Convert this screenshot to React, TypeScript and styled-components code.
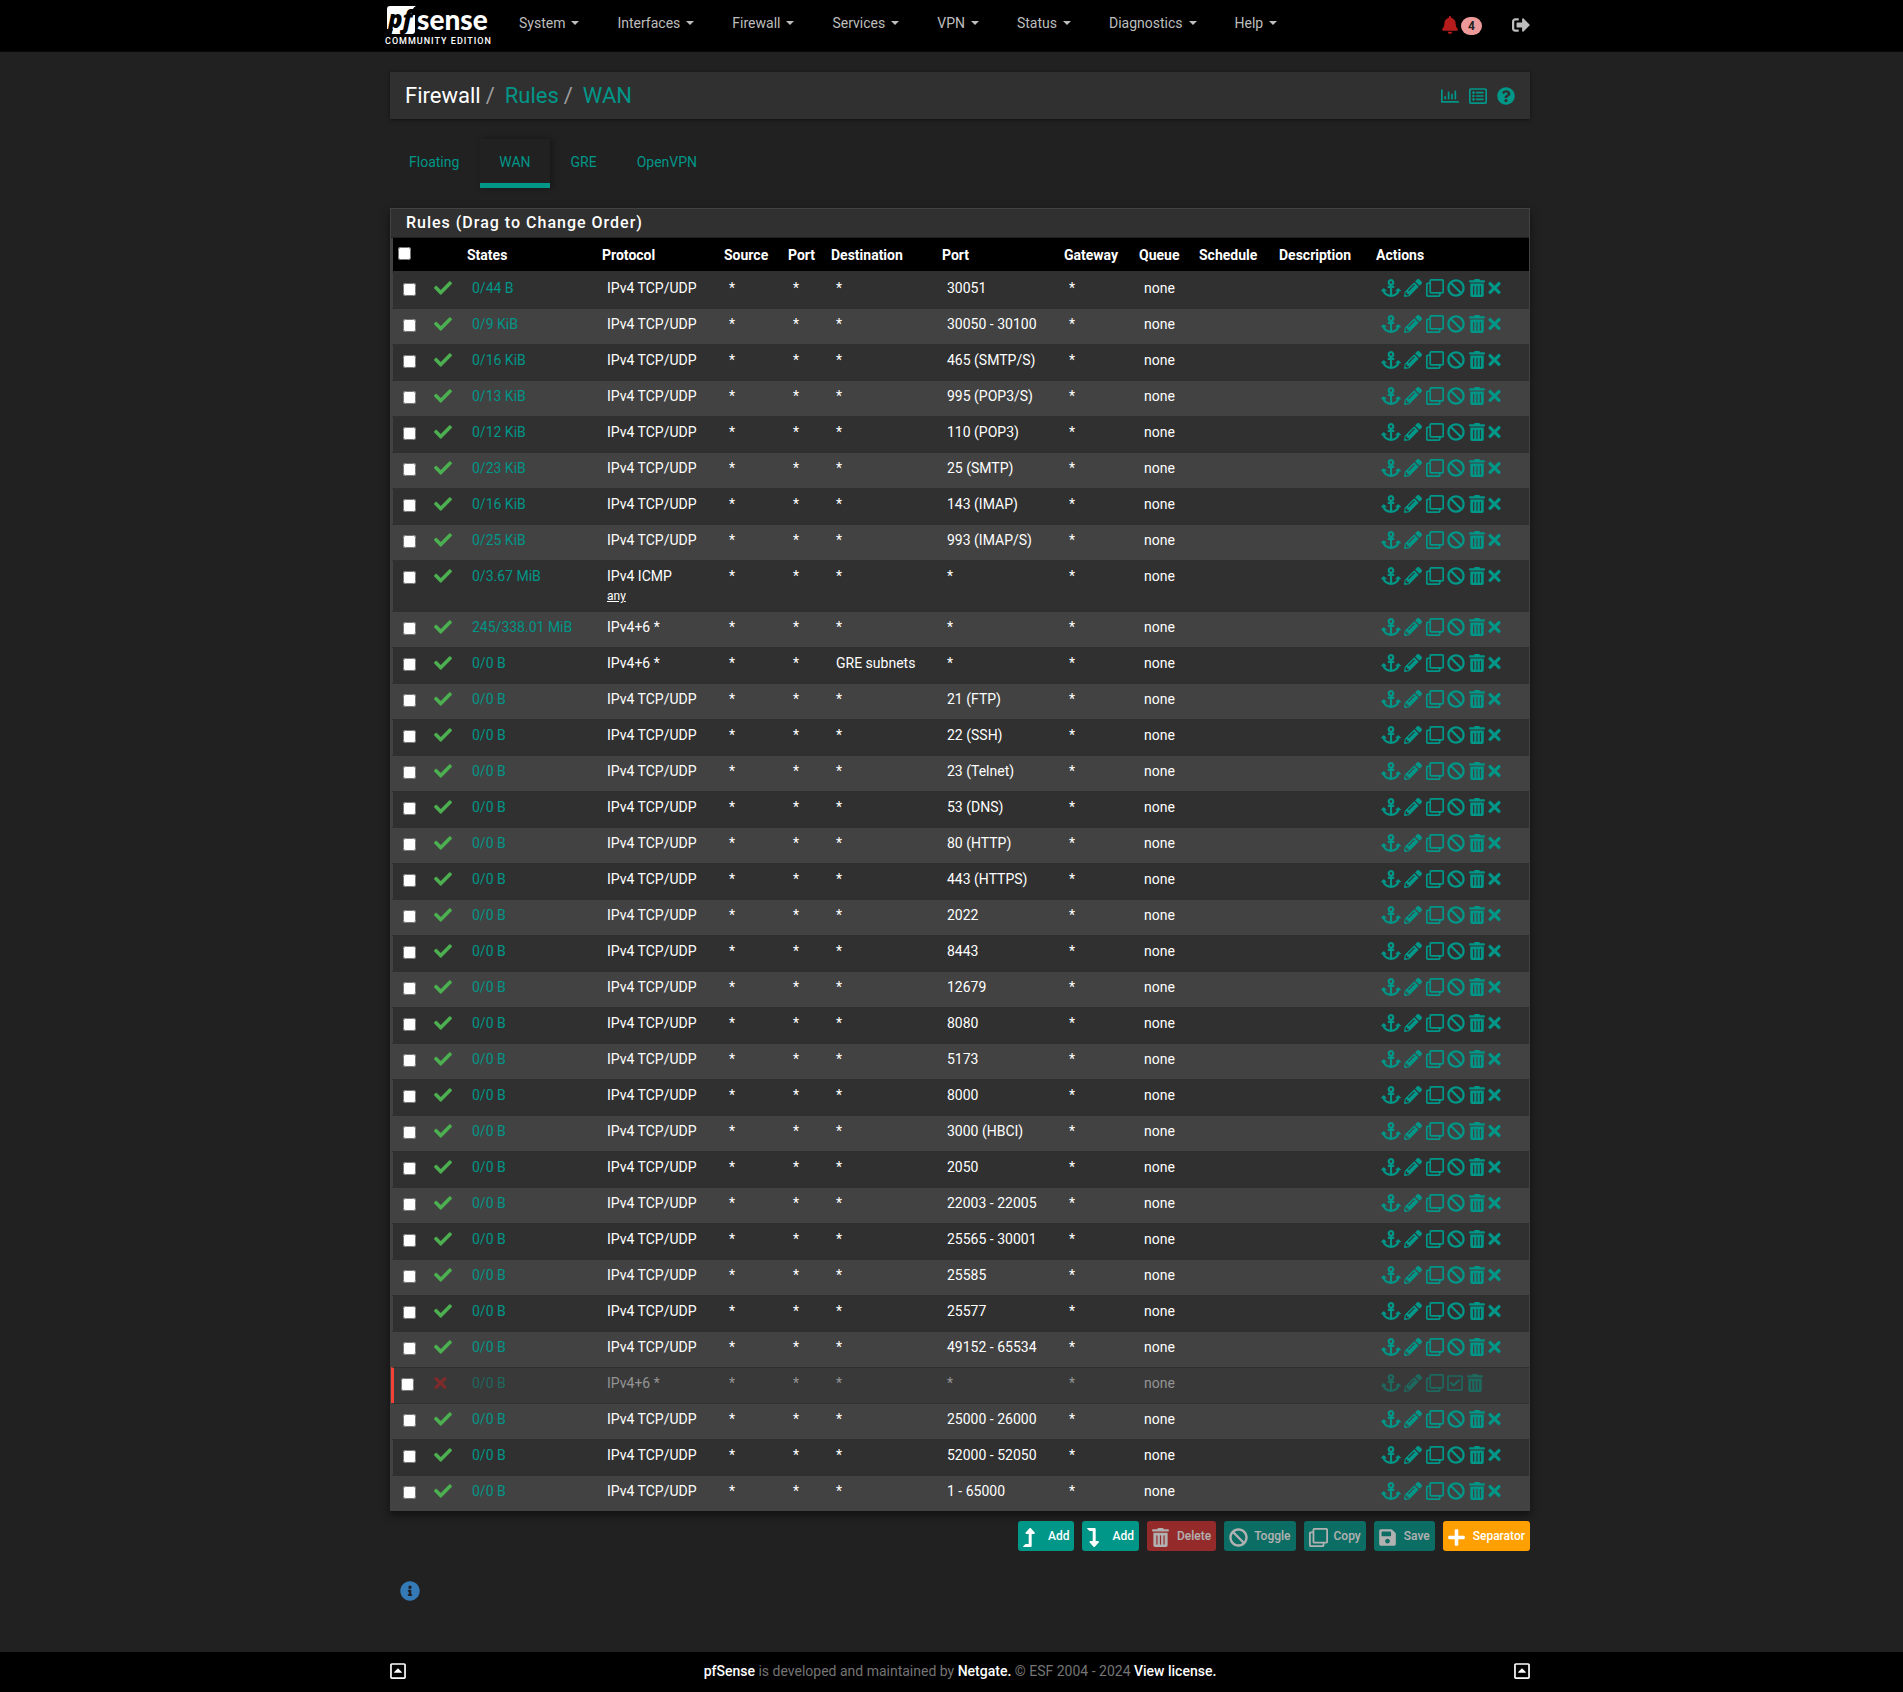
import React from "react";
import styled, { createGlobalStyle, css } from "styled-components";
import {
  FaAnchor, FaBan, FaBell, FaCheck, FaInfoCircle, FaLevelDownAlt, FaLevelUpAlt, FaPencilAlt, FaPlus,
  FaQuestionCircle, FaRegCaretSquareUp, FaRegChartBar, FaRegCheckSquare, FaRegClone, FaRegListAlt,
  FaSave, FaSignOutAlt, FaTimes, FaTrashAlt,
} from "react-icons/fa";

const teal = "#009688";
const dark = "#303030";
const light = "#424242";

const GlobalStyle = createGlobalStyle`
  * { box-sizing: border-box; }
  body {
    margin: 0;
    background: #212121;
    color: #fff;
    font: 14px/20px Roboto, "Liberation Sans", sans-serif;
  }
  a { color: ${teal}; text-decoration: none; }
  svg { display: block; }
`;

const Page = styled.div`
  display: flex;
  flex-direction: column;
  min-height: 100vh;
`;

const Gutter = styled.div`
  padding-left: 17px;
`;

const Inner = styled.div`
  width: 100%;
  max-width: 1140px;
  margin: 0 auto;
`;

/* Glyph whose box is as wide as its own drawing */
const Glyph = styled.span<{ $w: number; $h?: number }>`
  display: block;
  width: ${(p) => p.$w}px;
  svg { width: 100%; height: ${(p) => p.$h ?? 18}px; }
`;

const NavBar = styled.header`
  background: #000;
  border-bottom: 1px solid #080808;
`;

const NavRow = styled(Inner)`
  display: flex;
  align-items: flex-start;
  height: 51px;
`;

const Brand = styled.a`
  display: flex;
  flex-direction: column;
  width: 115px;
  margin-left: -5px;
  color: #fff;
`;

const Edition = styled.span`
  font-size: 9px;
  line-height: 10px;
  font-weight: 500;
  letter-spacing: 1px;
  white-space: nowrap;
`;

const Menu = styled.nav`
  display: flex;
  flex: 1;
`;

const MenuLink = styled.a`
  display: flex;
  align-items: center;
  gap: 6px;
  padding: 13px 19px 18px;
  color: #bdbdbd;
`;

const Caret = styled.span`
  border: 4px solid transparent;
  border-top-color: currentColor;
  border-bottom: 0;
`;

const NavIcons = styled.div`
  display: flex;
  align-items: center;
  gap: 30px;
  padding-top: 14px;
`;

const Alerts = styled.a`
  display: flex;
  align-items: center;
  gap: 3px;
  color: #b71c1c;
`;

const Badge = styled.span`
  min-width: 21px;
  margin-top: 3px;
  border-radius: 10px;
  background: #ef9a9a;
  color: #212121;
  font-size: 12px;
  line-height: 18px;
  font-weight: 700;
  text-align: center;
`;

const Logout = styled.a`
  color: #bdbdbd;
`;

const Main = styled(Inner)`
  padding: 20px 0 30px;
`;

const TitleBar = styled.div`
  display: flex;
  align-items: center;
  justify-content: space-between;
  height: 47px;
  padding: 0 15px;
  background: ${dark};
  box-shadow: 0 1px 4px rgba(0, 0, 0, 0.5);
`;

const Crumbs = styled.ol`
  display: flex;
  margin: 0;
  padding: 0;
  list-style: none;
  font-size: 22px;
  line-height: 30px;
`;

const Crumb = styled.li`
  & + &::before {
    content: "/";
    padding: 0 10px 0 5px;
    color: #9e9e9e;
  }
`;

const TitleIcons = styled.div`
  display: flex;
  gap: 10px;
`;

const Tabs = styled.nav`
  display: flex;
  gap: 2px;
  margin: 20px 0;
`;

const Tab = styled.a<{ $active?: boolean }>`
  padding: 13px 19px 11px;
  border-bottom: 5px solid ${(p) => (p.$active ? teal : "transparent")};
  ${(p) => p.$active && css`box-shadow: 2px 0 6px rgba(0, 0, 0, 0.35);`}
`;

const Panel = styled.section`
  border: 1px solid ${light};
  border-bottom: 0;
  background: ${light};
  box-shadow: 0 4px 8px rgba(0, 0, 0, 0.5);
`;

const PanelTitle = styled.h2`
  margin: 0;
  padding: 4px 15px;
  border-bottom: 1px solid #212121;
  background: ${dark};
  font-size: 16px;
  line-height: 20px;
  font-weight: 500;
  letter-spacing: 1px;
`;

const Table = styled.table`
  width: 100%;
  table-layout: fixed;
  border-collapse: separate;
  border-spacing: 0;
`;

const Col = styled.col<{ $w: number }>`
  width: ${(p) => p.$w}px;
`;

const Th = styled.th`
  height: 34px;
  padding: 2px 5px 1px;
  border-bottom: 1px solid ${dark};
  background: #000;
  font-weight: 700;
  text-align: left;
  white-space: nowrap;
  &:first-child { border-left: 2px solid ${light}; padding: 0 5px 2px; }
`;

const Td = styled.td`
  height: 36px;
  padding: 5px 0 10px 10px;
  border-top: 1px solid ${dark};
  vertical-align: top;
  white-space: nowrap;
  &:first-child { border-left: 2px solid ${light}; }
`;

const Row = styled.tr<{ $disabled?: boolean }>`
  background: ${light};
  &:nth-child(odd) { background: ${dark}; }
  ${(p) => p.$disabled && css`
    && { background: #393939; }
    & > ${Td} { color: #949494; }
    & > ${Td}:first-child { border-left: 3px solid #f44336; padding-left: 7px; }
    a { color: #1d685f; }
  `}
`;

const Check = styled.input`
  display: block;
  width: 13px;
  height: 13px;
  margin: 0;
  ${Td} & { margin-top: 5px; }
`;

const Status = styled.div<{ $pass: boolean }>`
  padding-top: 1px;
  color: ${(p) => (p.$pass ? "#4caf50" : "#7d2b2b")};
`;

const Any = styled.u`
  display: block;
  margin-bottom: -5px;
  font-size: 12px;
  line-height: 20px;
`;

const Actions = styled.div`
  a { display: inline-block; padding-top: 1px; vertical-align: top; }
`;

const Buttons = styled.div`
  display: flex;
  justify-content: flex-end;
  gap: 8px;
  margin: 10px 0 30px;
`;

const Button = styled.button<{ $color?: string }>`
  display: flex;
  align-items: center;
  height: 30px;
  padding: 0 5px;
  border: 0;
  border-radius: 3px;
  background: ${(p) => p.$color ?? teal};
  color: #fff;
  font: 500 12px/18px Roboto, "Liberation Sans", sans-serif;
  &:disabled { opacity: 0.65; }
`;

const ButtonIcon = styled.span`
  width: 25px;
  padding-top: 2px;
`;

const Info = styled.a`
  display: inline-block;
  margin-left: 10px;
  color: #337ab7;
`;

const Footer = styled.footer`
  margin-top: auto;
  background: #000;
`;

const FooterRow = styled(Inner)`
  display: flex;
  align-items: center;
  justify-content: space-between;
  height: 40px;
  padding-bottom: 2px;
  color: #757575;
  a { color: #fff; font-weight: 500; }
`;

type Rule = {
  states: string;
  protocol?: string;
  sub?: string;
  destination?: string;
  port: string;
  disabled?: boolean;
};

const columns = [
  ["", 33], ["", 38], ["States", 135], ["Protocol", 122], ["Source", 64], ["Port", 43], ["Destination", 111],
  ["Port", 122], ["Gateway", 75], ["Queue", 60], ["Schedule", 80], ["Description", 97], ["Actions", 158],
] as const;

const zero = (ports: string[]): Rule[] => ports.map((port) => ({ states: "0/0 B", port }));

const rules: Rule[] = [
  { states: "0/44 B", port: "30051" },
  { states: "0/9 KiB", port: "30050 - 30100" },
  { states: "0/16 KiB", port: "465 (SMTP/S)" },
  { states: "0/13 KiB", port: "995 (POP3/S)" },
  { states: "0/12 KiB", port: "110 (POP3)" },
  { states: "0/23 KiB", port: "25 (SMTP)" },
  { states: "0/16 KiB", port: "143 (IMAP)" },
  { states: "0/25 KiB", port: "993 (IMAP/S)" },
  { states: "0/3.67 MiB", protocol: "IPv4 ICMP", sub: "any", port: "*" },
  { states: "245/338.01 MiB", protocol: "IPv4+6 *", port: "*" },
  { states: "0/0 B", protocol: "IPv4+6 *", destination: "GRE subnets", port: "*" },
  ...zero([
    "21 (FTP)", "22 (SSH)", "23 (Telnet)", "53 (DNS)", "80 (HTTP)", "443 (HTTPS)", "2022", "8443", "12679", "8080",
    "5173", "8000", "3000 (HBCI)", "2050", "22003 - 22005", "25565 - 30001", "25585", "25577", "49152 - 65534",
  ]),
  { states: "0/0 B", protocol: "IPv4+6 *", port: "*", disabled: true },
  ...zero(["25000 - 26000", "52000 - 52050", "1 - 65000"]),
];

const menu = ["System", "Interfaces", "Firewall", "Services", "VPN", "Status", "Diagnostics", "Help"];

const buttons = [
  { label: "Add", icon: <FaLevelUpAlt />, width: 12 },
  { label: "Add", icon: <FaLevelDownAlt />, width: 12 },
  { label: "Delete", icon: <FaTrashAlt />, width: 17, color: "#d32f2f", disabled: true },
  { label: "Toggle", icon: <FaBan />, width: 19, disabled: true },
  { label: "Copy", icon: <FaRegClone />, width: 19, disabled: true },
  { label: "Save", icon: <FaSave />, width: 17, disabled: true },
  { label: "Separator", icon: <FaPlus />, width: 17, color: "#ffa000" },
];

function Logo() {
  return (
    <svg width="110" height="36" viewBox="0 -5 110 36" role="img" aria-label="pfSense">
      <path d="M5 1H31Q27 3 26 10H30V26Q30 29 27 29H6L8 24H2V4Q2 1 5 1Z" fill="#fff" />
      <text x="3" y="23" fontFamily="Open Sans, sans-serif" fontSize="24" fontWeight="800" fontStyle="italic">pf</text>
      <text x="32" y="25" fontFamily="Lato, sans-serif" fontSize="28" fontWeight="900" fill="#fff">sense</text>
    </svg>
  );
}

function RuleActions({ disabled }: { disabled?: boolean }) {
  return (
    <Actions>
      <a href="#anchor" aria-label="Move checked rules"><Glyph $w={20}><FaAnchor /></Glyph></a>{" "}
      <a href="#edit" aria-label="Edit"><Glyph $w={18}><FaPencilAlt /></Glyph></a>{" "}
      <a href="#copy" aria-label="Copy"><Glyph $w={18}><FaRegClone /></Glyph></a>{" "}
      {disabled ? (
        <a href="#toggle" aria-label="Enable"><Glyph $w={16}><FaRegCheckSquare /></Glyph></a>
      ) : (
        <a href="#toggle" aria-label="Disable"><Glyph $w={18}><FaBan /></Glyph></a>
      )}{" "}
      <a href="#delete" aria-label="Delete"><Glyph $w={16}><FaTrashAlt /></Glyph></a>{" "}
      {!disabled && <a href="#states" aria-label="Kill states"><Glyph $w={13}><FaTimes /></Glyph></a>}
    </Actions>
  );
}

function RuleRow({ rule, index }: { rule: Rule; index: number }) {
  return (
    <Row $disabled={rule.disabled}>
      <Td><Check type="checkbox" aria-label={`Select rule ${index + 1}`} /></Td>
      <Td>
        <Status $pass={!rule.disabled}>
          {rule.disabled ? <Glyph $w={13}><FaTimes /></Glyph> : <Glyph $w={18}><FaCheck /></Glyph>}
        </Status>
      </Td>
      <Td><a href="#states">{rule.states}</a></Td>
      <Td>{rule.protocol ?? "IPv4 TCP/UDP"}{rule.sub && <Any>{rule.sub}</Any>}</Td>
      <Td>*</Td>
      <Td>*</Td>
      <Td>{rule.destination ?? "*"}</Td>
      <Td>{rule.port}</Td>
      <Td>*</Td>
      <Td>none</Td>
      <Td />
      <Td />
      <Td><RuleActions disabled={rule.disabled} /></Td>
    </Row>
  );
}

export default function App() {
  return (
    <Page>
      <GlobalStyle />
      <NavBar>
        <Gutter>
          <NavRow>
            <Brand href="#home">
              <Logo />
              <Edition>COMMUNITY EDITION</Edition>
            </Brand>
            <Menu>
              {menu.map((m) => <MenuLink key={m} href={`#${m}`}>{m}<Caret /></MenuLink>)}
            </Menu>
            <NavIcons>
              <Alerts href="#alerts"><Glyph $w={16}><FaBell /></Glyph><Badge>4</Badge></Alerts>
              <Logout href="#logout" aria-label="Logout"><Glyph $w={18}><FaSignOutAlt /></Glyph></Logout>
            </NavIcons>
          </NavRow>
        </Gutter>
      </NavBar>
      <Gutter>
        <Main as="main">
          <TitleBar>
            <Crumbs>
              <Crumb>Firewall</Crumb>
              <Crumb><a href="#rules">Rules</a></Crumb>
              <Crumb><a href="#wan">WAN</a></Crumb>
            </Crumbs>
            <TitleIcons>
              <a href="#status" aria-label="Status"><Glyph $w={18}><FaRegChartBar /></Glyph></a>
              <a href="#log" aria-label="Log"><Glyph $w={18}><FaRegListAlt /></Glyph></a>
              <a href="#help" aria-label="Help"><Glyph $w={18}><FaQuestionCircle /></Glyph></a>
            </TitleIcons>
          </TitleBar>
          <Tabs>
            <Tab href="#floating">Floating</Tab>
            <Tab href="#wan" $active>WAN</Tab>
            <Tab href="#gre">GRE</Tab>
            <Tab href="#openvpn">OpenVPN</Tab>
          </Tabs>
          <Panel>
            <PanelTitle>Rules (Drag to Change Order)</PanelTitle>
            <Table>
              <colgroup>{columns.map(([, w], i) => <Col key={i} $w={w} />)}</colgroup>
              <thead>
                <tr>
                  {columns.map(([name], i) => (
                    <Th key={i}>{i === 0 ? <Check type="checkbox" aria-label="Select all rules" /> : name}</Th>
                  ))}
                </tr>
              </thead>
              <tbody>{rules.map((r, i) => <RuleRow key={i} rule={r} index={i} />)}</tbody>
            </Table>
          </Panel>
          <Buttons>
            {buttons.map((b, i) => (
              <Button key={i} type="button" $color={b.color} disabled={b.disabled}>
                <ButtonIcon><Glyph $w={b.width} $h={19}>{b.icon}</Glyph></ButtonIcon>
                {b.label}
              </Button>
            ))}
          </Buttons>
          <Info href="#info" aria-label="Information"><Glyph $w={20} $h={20}><FaInfoCircle /></Glyph></Info>
        </Main>
      </Gutter>
      <Footer>
        <Gutter>
          <FooterRow>
            <a href="#top" aria-label="Back to top"><Glyph $w={16}><FaRegCaretSquareUp /></Glyph></a>
            <span>
              <a href="#pfsense">pfSense</a> is developed and maintained by <a href="#netgate">Netgate.</a> © ESF 2004 - 2024{" "}
              <a href="#license">View license.</a>
            </span>
            <a href="#top" aria-label="Back to top"><Glyph $w={16}><FaRegCaretSquareUp /></Glyph></a>
          </FooterRow>
        </Gutter>
      </Footer>
    </Page>
  );
}
